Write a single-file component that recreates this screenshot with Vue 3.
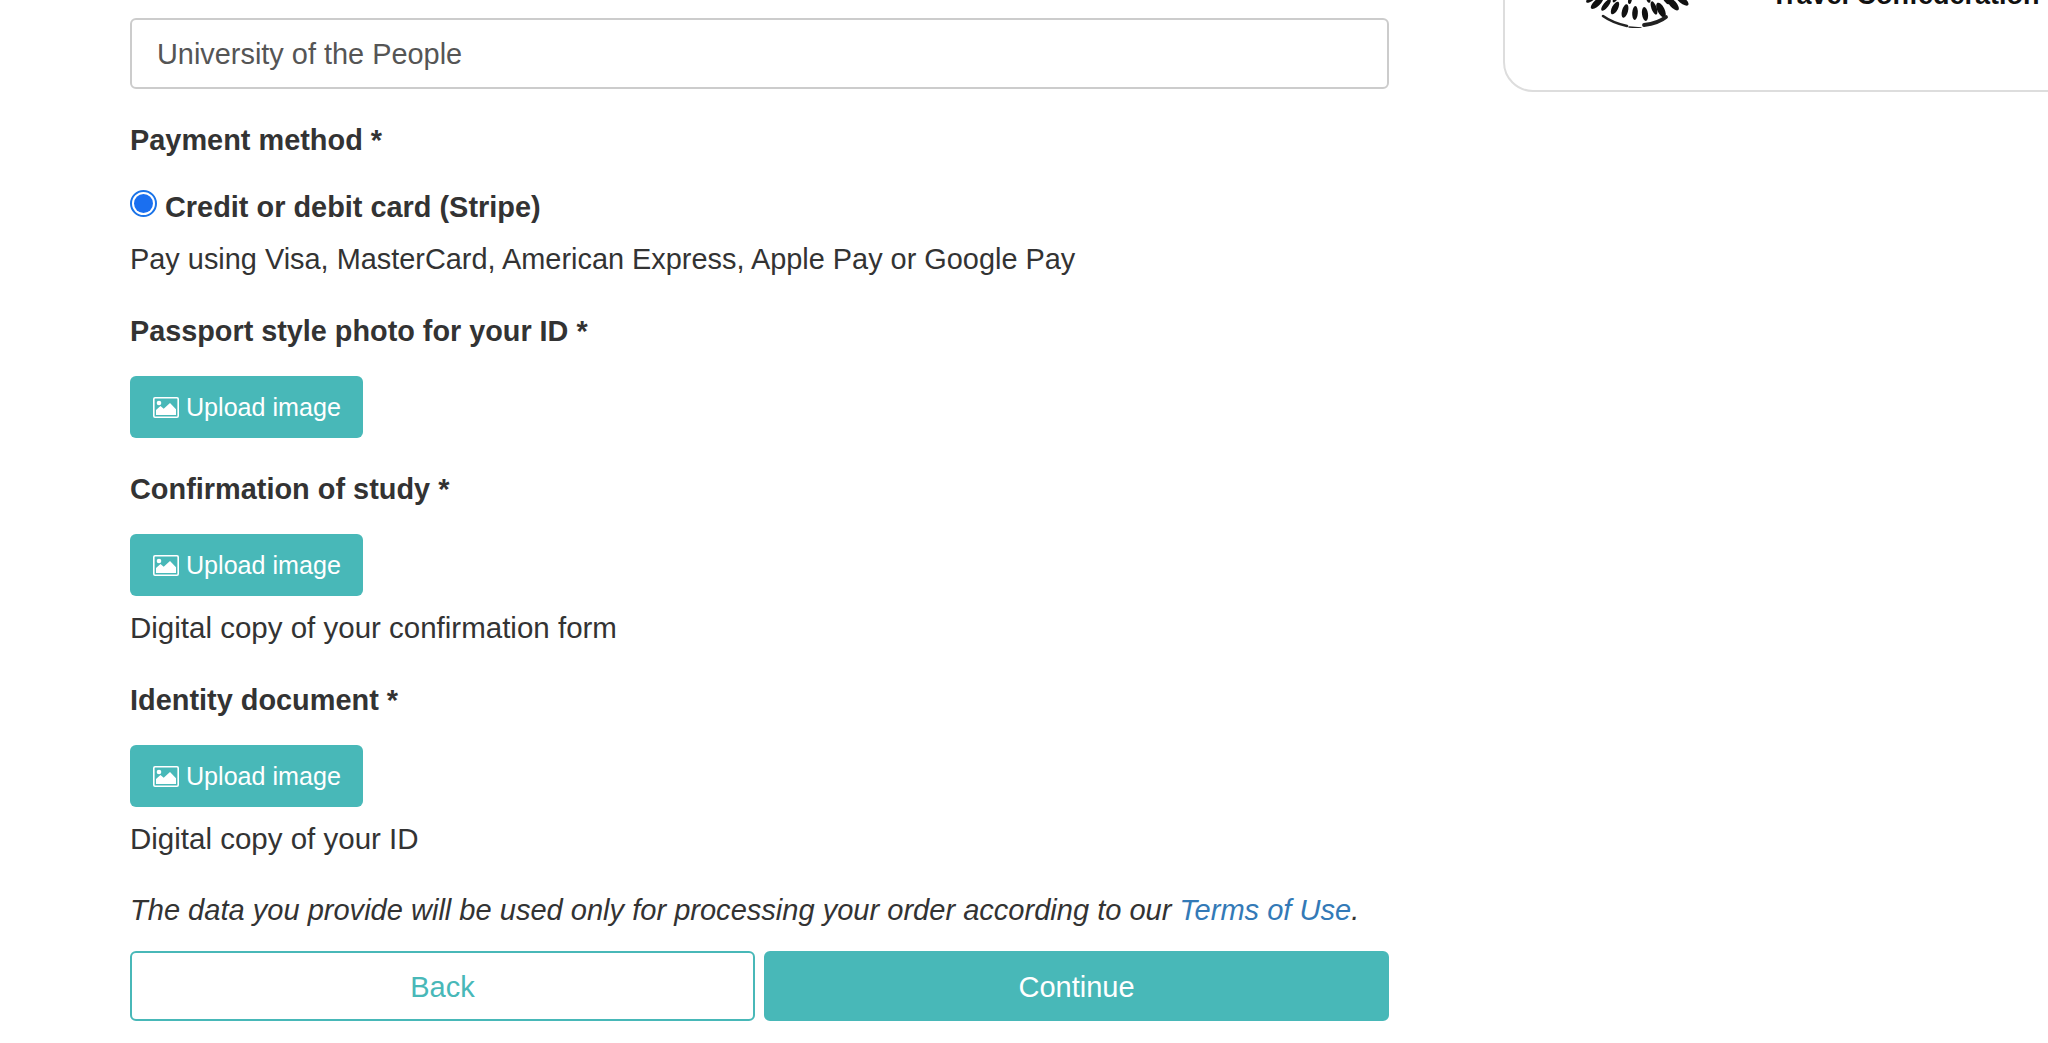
<script setup>
const uploads = [
  { label: 'Passport style photo for your ID *', cls: 'passport', help: '' },
  { label: 'Confirmation of study *', cls: 'study', help: 'Digital copy of your confirmation form' },
  { label: 'Identity document *', cls: 'identity', help: 'Digital copy of your ID' },
]

const center = { x: 52, y: 40 }
const leaf = (x, y, len, wid) => {
  const a = Math.atan2(y - center.y, x - center.x) * 180 / Math.PI
  return { x, y, len, wid, t: `rotate(${a.toFixed(1)} ${x} ${y})` }
}
const leaves = [
  leaf(6, 74, 7, 2.6), leaf(11, 79, 8, 3.2), leaf(20, 81, 7, 2.6), leaf(29, 84, 7, 3),
  leaf(39, 87, 7, 3), leaf(49, 89, 7, 2.8), leaf(59, 90, 7, 3), leaf(68, 84, 7, 2.6),
  leaf(75, 86, 8, 3.6), leaf(87, 80, 8, 3.4), leaf(96, 76, 8, 3.2), leaf(30, 74, 5, 2), leaf(62, 74, 5, 2),
  leaf(44, 76, 4, 1.8), leaf(80, 76, 5, 2),
]
</script>

<template>
  <div class="page">
    <main class="form">
      <div class="input">University of the People</div>

      <div class="label first">Payment method *</div>
      <label class="radio-row">
        <span class="radio"><span class="dot"></span></span>
        <span class="radio-text">Credit or debit card (Stripe)</span>
      </label>
      <p class="help pay">Pay using Visa, MasterCard, American Express, Apple Pay or Google Pay</p>

      <section v-for="u in uploads" :key="u.cls">
        <div class="label" :class="u.cls">{{ u.label }}</div>
        <button class="upload">
          <svg class="ico" viewBox="0 0 26 21" width="26" height="21">
            <rect x="0.8" y="0.8" width="24.4" height="19.4" rx="1.2" fill="none" stroke="#fff" stroke-width="1.6" />
            <circle cx="6" cy="6" r="2.3" fill="#fff" />
            <path d="M3 18v-5l4.5-4 3.2 2.8L17 6l6 6.2V18z" fill="#fff" />
          </svg>
          <span>Upload image</span>
        </button>
        <p v-if="u.help" class="help after">{{ u.help }}</p>
      </section>

      <p class="terms">The data you provide will be used only for processing your order according to our <a class="link">Terms of Use</a>.</p>

      <div class="actions">
        <button class="btn back">Back</button>
        <button class="btn next">Continue</button>
      </div>
    </main>

    <aside class="card">
      <svg class="globe" viewBox="0 0 104 104" width="104" height="104">
        <g fill="#111">
          <ellipse v-for="(l, i) in leaves" :key="i" :cx="l.x" :cy="l.y" :rx="l.len" :ry="l.wid" :transform="l.t" />
        </g>
        <g fill="none" stroke="#222" stroke-linecap="round">
          <path d="M17 92c7 5 15 8 24 10" stroke-width="2.6" />
          <path d="M58 101c8-1 16-3 22-8" stroke-width="3.8" />
          <path d="M43 103l12 1" stroke-width="1.4" />
        </g>
      </svg>
      <div class="org">Travel Confederation</div>
    </aside>
  </div>
</template>

<style>
html, body { margin: 0; height: 100%; overflow: hidden; background: #fff; }
</style>

<style scoped>
.page {
  width: 2048px;
  height: 1043px;
  overflow: hidden;
  display: flex;
  align-items: flex-start;
  font-family: "Liberation Sans", Arial, sans-serif;
  color: #333;
  font-size: 28.9px;
  line-height: 40px;
}
.form {
  width: 1259px;
  margin-left: 130px;
  padding-top: 18px;
  flex: none;
}
.input {
  box-sizing: border-box;
  height: 71px;
  border: 2px solid #ccc;
  border-radius: 6px;
  padding: 14px 25px 0;
  color: #555;
}
.label { font-weight: 700; }
.first { margin-top: 31px; }
.radio-row { display: flex; align-items: flex-start; margin-top: 27px; height: 40px; }
.radio {
  box-sizing: border-box;
  width: 27px;
  height: 27px;
  margin: 3px 8px 0 0;
  border: 2px solid #1a73e8;
  border-radius: 50%;
  display: flex;
  align-items: center;
  justify-content: center;
  flex: none;
}
.dot { width: 19px; height: 19px; border-radius: 50%; background: #1a6ff0; }
.radio-text { font-weight: 700; }
.help { margin: 0; }
.pay { margin-top: 12px; }
.passport { margin-top: 32px; font-size: 28.8px; }
.upload {
  display: flex;
  align-items: center;
  box-sizing: border-box;
  width: 233px;
  height: 62px;
  margin-top: 25px;
  padding: 0 0 0 23px;
  border: 0;
  border-radius: 6px;
  background: #48b8b8;
  color: #fff;
  font: inherit;
  font-size: 25.1px;
  white-space: nowrap;
}
.ico { margin-right: 7px; flex: none; }
.study { margin-top: 31px; }
.after { margin-top: 12px; font-size: 29.5px; }
.identity { margin-top: 32px; }
.terms { margin: 31px 0 0; font-size: 29.05px; font-style: italic; }
.link { color: #337ab7; }
.actions { display: flex; gap: 9px; margin-top: 21px; }
.btn {
  flex: 1;
  box-sizing: border-box;
  height: 70px;
  padding-top: 2px;
  border-radius: 6px;
  font: inherit;
  font-size: 29px;
}
.back { background: #fff; border: 2px solid #48b8b8; color: #48b8b8; }
.next { background: #48b8b8; border: 2px solid #48b8b8; color: #fff; }
.card {
  box-sizing: border-box;
  flex: none;
  width: 700px;
  height: 200px;
  margin-left: 114px;
  margin-top: -108px;
  border: 2px solid #ddd;
  border-radius: 30px;
  display: flex;
  align-items: flex-start;
  padding: 30px 0 0 81px;
}
.globe { flex: none; filter: blur(0.6px); }
.org {
  margin: 51px 0 0 81px;
  font-size: 27px;
  line-height: 40px;
  font-weight: 700;
  color: #111;
  white-space: nowrap;
}
</style>
